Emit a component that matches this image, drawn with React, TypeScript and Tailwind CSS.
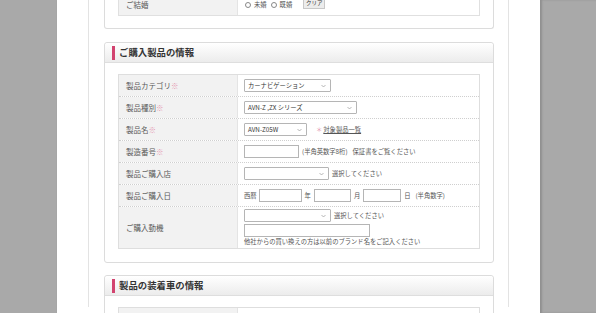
import React from "react";

const jp = { fontFamily: '"Noto Sans CJK JP", "Noto Sans", sans-serif' };

function Chevron() {
  return (
    <svg width="5" height="4" viewBox="0 0 5 4" className="shrink-0">
      <path d="M0.5 1 L2.5 3 L4.5 1" fill="none" stroke="#999" strokeWidth="0.7" />
    </svg>
  );
}

function Select({ w, text }: { w: string; text?: string }) {
  return (
    <div className={`${w} h-[13px] border border-[#b5b5b5] bg-white flex items-center justify-between pl-[3px] pr-[4px] text-[6.3px] text-[#333] rounded-[1px]`}>
      <span>{text ?? ""}</span>
      <Chevron />
    </div>
  );
}

function Input({ w }: { w: string }) {
  return <div className={`${w} h-[13px] border border-[#b5b5b5] bg-white`} />;
}

function Row({ label, req, children, h = "h-[22px]", last }: { label: string; req?: boolean; children: React.ReactNode; h?: string; last?: boolean }) {
  return (
    <div className={`flex ${h} ${last ? "" : "border-b border-dotted border-[#cfcfcf]"}`}>
      <div className="w-[119px] bg-[#f2f2f2] border-r border-[#e4e4e4] flex items-center pl-[7px] text-[7.5px] text-[#5a5a5a]">
        {label}
        {req && <span className="text-[#e597b0]">※</span>}
      </div>
      <div className="flex-1 flex items-center pl-[6px] text-[6.3px] text-[#555]">{children}</div>
    </div>
  );
}

function SectionHeader({ title }: { title: string }) {
  return (
    <div className="h-[20px] bg-gradient-to-b from-white to-[#ececec] border-b border-[#dedede] flex items-center pl-[7px] rounded-t-[3px]">
      <div className="w-[3px] h-[14px] bg-[#d2436f]" />
      <span className="ml-[4px] text-[9.4px] font-bold text-[#333]">{title}</span>
    </div>
  );
}

function Radio() {
  return <span className="inline-block w-[6px] h-[6px] rounded-full border border-[#888] bg-white mr-[3px]" />;
}

export default function App() {
  return (
    <div className="w-[596px] h-[313px] overflow-hidden flex bg-[#a9a9a9]" style={jp}>
      <div className="w-[57px] shrink-0 bg-[#a9a9a9]" />
      <div className="w-[483px] shrink-0 bg-white px-[31px] shadow-[1px_0_2px_rgba(0,0,0,0.25)]">
        <div className="h-full border-x border-[#e3e3e3] pl-[15px] pr-[14px]">
          {/* top box */}
          <div className="border-x border-b border-[#dcdcdc] rounded-b-[3px] px-[13px] pb-[12px]">
            <div className="mt-[-6px] flex h-[22px] border-x border-b border-[#e0e0e0]">
              <div className="w-[119px] bg-[#f2f2f2] border-r border-[#e4e4e4] flex items-center pl-[7px] text-[7.5px] text-[#5a5a5a]">ご結婚</div>
              <div className="flex-1 flex items-center pl-[7px] text-[6.3px] text-[#555]">
                <Radio />
                <span className="mr-[4px]">未婚</span>
                <Radio />
                <span>既婚</span>
                <div className="ml-[11px] w-[22px] h-[11px] mt-[-2px] bg-[#ececec] border border-[#c8c8c8] flex items-center justify-center text-[5.5px] text-[#333]">クリア</div>
              </div>
            </div>
          </div>

          {/* section 2 */}
          <div className="mt-[13px] border border-[#dcdcdc] rounded-[3px]">
            <SectionHeader title="ご購入製品の情報" />
            <div className="mx-[13px] mt-[11px] mb-[13px] border border-[#dedede]">
              <Row label="製品カテゴリ" req>
                <Select w="w-[87px]" text="カーナビゲーション" />
              </Row>
              <Row label="製品種別" req>
                <Select w="w-[113px]" text="AVN-Z ,ZX シリーズ" />
              </Row>
              <Row label="製品名" req>
                <Select w="w-[63px]" text="AVN-Z05W" />
                <span className="ml-[9px] text-[#e597b0]">＊</span>
                <span className="ml-[1px] underline text-[#555]">対象製品一覧</span>
              </Row>
              <Row label="製造番号" req>
                <Input w="w-[55px]" />
                <span className="ml-[3px]">(半角英数字8桁)</span>
                <span className="ml-[5px]">保証書をご覧ください</span>
              </Row>
              <Row label="製品ご購入店">
                <Select w="w-[85px]" />
                <span className="ml-[3px]">選択してください</span>
              </Row>
              <Row label="製品ご購入日">
                <span>西暦</span>
                <div className="ml-[2px]"><Input w="w-[43px]" /></div>
                <span className="ml-[3px]">年</span>
                <div className="ml-[3px]"><Input w="w-[37px]" /></div>
                <span className="ml-[3px]">月</span>
                <div className="ml-[3px]"><Input w="w-[38px]" /></div>
                <span className="ml-[3px]">日</span>
                <span className="ml-[5px]">(半角数字)</span>
              </Row>
              <Row label="ご購入動機" h="h-[41px]" last>
                <div className="flex flex-col">
                  <div className="flex items-center">
                    <Select w="w-[87px]" />
                    <span className="ml-[3px]">選択してください</span>
                  </div>
                  <div className="mt-[2px]"><Input w="w-[126px]" /></div>
                  <span className="mt-[1px] leading-[8px]">他社からの買い換えの方は以前のブランド名をご記入ください</span>
                </div>
              </Row>
            </div>
          </div>

          {/* section 3 */}
          <div className="mt-[12px] border border-[#dcdcdc] rounded-[3px]">
            <SectionHeader title="製品の装着車の情報" />
            <div className="mx-[13px] mt-[11px] border border-[#dedede] flex h-[22px]">
              <div className="w-[119px] bg-[#f2f2f2] border-r border-[#e4e4e4]" />
              <div className="flex-1" />
            </div>
          </div>
        </div>
      </div>
      <div className="flex-1 bg-[#a9a9a9] shadow-[inset_2px_0_2px_rgba(0,0,0,0.15)]" />
    </div>
  );
}
